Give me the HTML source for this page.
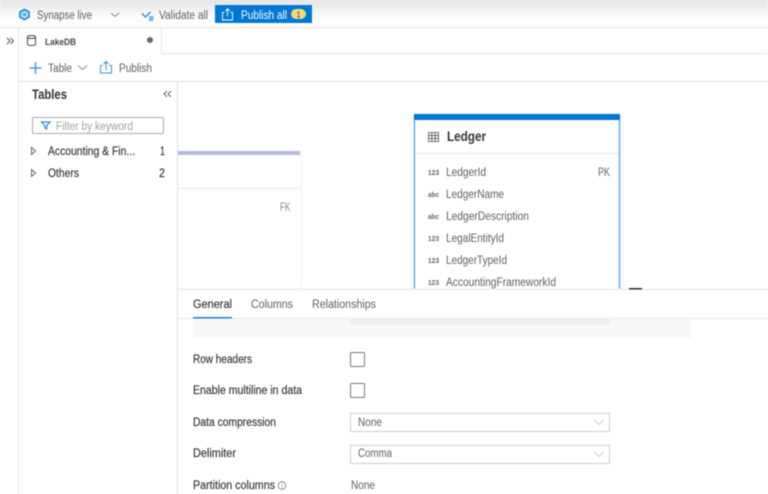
<!DOCTYPE html>
<html><head><meta charset="utf-8"><title>LakeDB</title>
<style>
html,body{margin:0;padding:0;background:#fff;width:768px;height:494px;overflow:hidden}
svg{display:block;filter:blur(.45px)}
text{font-family:"Liberation Sans",sans-serif;font-size:11.5px;fill:#444;}
.d{fill:#323130}.g{fill:#605e5c}.m{font-weight:400;fill:#333;stroke:#333;stroke-width:.15px}
.t{font-size:7.5px;font-weight:700;fill:#666}
</style></head><body>
<svg width="768" height="494" viewBox="0 0 768 494" xmlns="http://www.w3.org/2000/svg">
<defs><linearGradient id="top" x1="0" y1="0" x2="0" y2="1"><stop offset="0" stop-color="#e4e4e4"/><stop offset=".6" stop-color="#fbfbfb"/><stop offset="1" stop-color="#fff"/></linearGradient></defs>
<rect width="768" height="494" fill="#fff"/>
<rect width="768" height="27" fill="url(#top)"/>
<rect y="27" width="768" height="1.500" fill="#ececec"/>
<rect x="18" y="28" width="1" height="466" fill="#e6e6e6"/>
<rect x="161" y="28" width="1" height="25" fill="#e6e6e6"/>
<rect x="161" y="53" width="607" height="1" fill="#e6e6e6"/>
<rect x="19" y="81" width="749" height="1" fill="#dedede"/>
<rect x="177" y="82" width="1" height="412" fill="#dedede"/>

<!-- top bar -->
<path d="M24.500 9.500l4.500 2.500v5l-4.500 2.500-4.500-2.500v-5z" fill="#bfe3f7" stroke="#1f8ad8" stroke-width="1.700"/><circle cx="24.500" cy="14.500" r="1.800" fill="#4fb0e8"/>
<text x="37" y="19" class="g" textLength="55" lengthAdjust="spacingAndGlyphs">Synapse live</text>
<path d="M111 13l4 3.500 4-3.500" fill="none" stroke="#888" stroke-width="1"/>
<path d="M142 13.500l3.500 3.500 5-5" fill="none" stroke="#2a80c8" stroke-width="1.300"/><rect x="149" y="16" width="4.500" height="5" fill="#7ab8e8"/>
<text x="159" y="19" class="g" textLength="49" lengthAdjust="spacingAndGlyphs">Validate all</text>
<rect x="215" y="5" width="97" height="18" fill="#0078d4"/>
<path d="M224.500 12.500h-2v7.500h10v-7.500h-2M227.500 16.500v-7.500M225.300 11l2.200-2.200 2.200 2.200" fill="none" stroke="#fff" stroke-width=".9"/>
<text x="241" y="19" style="fill:#fff" textLength="46" lengthAdjust="spacingAndGlyphs">Publish all</text>
<rect x="291" y="9" width="15" height="10" rx="5" fill="#f5d77c"/>
<text x="296.500" y="17.500" style="font-size:8px;fill:#333" textLength="4" lengthAdjust="spacingAndGlyphs">1</text>

<!-- left strip -->
<path d="M7 38l3 3-3 3M10.500 38l3 3-3 3" fill="none" stroke="#555" stroke-width="1"/>

<!-- tab -->
<g fill="none" stroke="#444" stroke-width="1"><ellipse cx="31.500" cy="37" rx="4" ry="1.500"/><path d="M27.500 37v7c0 1 1.800 1.500 4 1.500s4-.5 4-1.500v-7"/></g>
<text x="45" y="45" class="d" style="font-size:9.500px;font-weight:700;fill:#444" textLength="31" lengthAdjust="spacingAndGlyphs">LakeDB</text>
<circle cx="150" cy="40" r="3" fill="#6a6a6a"/>

<!-- toolbar -->
<path d="M35.500 62v12M29.500 68h12" stroke="#2a8fd8" stroke-width="1.200" fill="none"/>
<text x="48" y="72" class="g" textLength="24" lengthAdjust="spacingAndGlyphs">Table</text>
<path d="M78 65.500l4.500 4 4.500-4" fill="none" stroke="#888" stroke-width="1"/>
<path d="M103 65.500h-2.500v7.500h11v-7.500h-2.500M106 70v-8M103.500 64l2.500-2.500 2.500 2.500" fill="none" stroke="#3a96d8" stroke-width="1"/>
<text x="119" y="72" class="g" textLength="33" lengthAdjust="spacingAndGlyphs">Publish</text>

<!-- tables panel -->
<text x="32" y="99" class="d" style="font-size:13.500px;font-weight:700" textLength="35" lengthAdjust="spacingAndGlyphs">Tables</text>
<path d="M167 91l-3 3 3 3M171 91l-3 3 3 3" fill="none" stroke="#666" stroke-width="1"/>
<rect x="32.500" y="117.500" width="131" height="16" rx="1" fill="#fff" stroke="#aaa"/>
<path d="M41.500 122h8.500l-3.200 3.500v3.500l-2-1v-2.500z" fill="none" stroke="#2a8fd8" stroke-width="1.200"/>
<text x="56" y="130" style="fill:#a0a0a0" textLength="77" lengthAdjust="spacingAndGlyphs">Filter by keyword</text>
<path d="M31.500 147.500l4 3.500-4 3.500z" fill="#fff" stroke="#666" stroke-width="1"/>
<text x="48" y="155" class="m" textLength="87" lengthAdjust="spacingAndGlyphs">Accounting &amp; Fin...</text>
<text x="160" y="155" class="m" textLength="5" lengthAdjust="spacingAndGlyphs">1</text>
<path d="M31.500 169.500l4 3.500-4 3.500z" fill="#fff" stroke="#666" stroke-width="1"/>
<text x="48" y="177" class="m" textLength="31" lengthAdjust="spacingAndGlyphs">Others</text>
<text x="159" y="177" class="m" textLength="6" lengthAdjust="spacingAndGlyphs">2</text>

<!-- left card -->
<rect x="300" y="153" width="3" height="136" fill="#f9f9f9"/>
<rect x="178" y="151" width="122" height="4" fill="#b4b9e0"/>
<rect x="178" y="188" width="122" height="1" fill="#e6e6e6"/>
<text x="280" y="211" style="fill:#888" textLength="10.500" lengthAdjust="spacingAndGlyphs">FK</text>

<!-- ledger card -->
<rect x="410" y="116" width="214" height="175" fill="#f9f9f9"/>
<rect x="414.500" y="114.500" width="205" height="180" rx="1" fill="#fff" stroke="#55a5e8" stroke-width="1.300"/>
<rect x="414" y="114" width="206" height="6" fill="#0078d4"/>
<rect x="415" y="153" width="204" height="1" fill="#e8e8e8"/>
<g fill="none" stroke="#666" stroke-width=".9"><rect x="428.500" y="132.500" width="10" height="9"/><path d="M428.500 135.500h10M428.500 138.500h10M431.800 132.500v9M435.200 132.500v9"/></g>
<text x="447" y="141" class="d" style="font-size:13.500px;font-weight:700" textLength="39" lengthAdjust="spacingAndGlyphs">Ledger</text>
<text x="428" y="175" class="t" textLength="11" lengthAdjust="spacingAndGlyphs">123</text>
<text x="446" y="176" class="g" textLength="40" lengthAdjust="spacingAndGlyphs">LedgerId</text>
<text x="598" y="176" class="g" textLength="12" lengthAdjust="spacingAndGlyphs">PK</text>
<text x="428" y="197" class="t" textLength="11" lengthAdjust="spacingAndGlyphs">abc</text>
<text x="446" y="198" class="g" textLength="58" lengthAdjust="spacingAndGlyphs">LedgerName</text>
<text x="428" y="219" class="t" textLength="11" lengthAdjust="spacingAndGlyphs">abc</text>
<text x="446" y="220" class="g" textLength="83" lengthAdjust="spacingAndGlyphs">LedgerDescription</text>
<text x="428" y="241" class="t" textLength="11" lengthAdjust="spacingAndGlyphs">123</text>
<text x="446" y="242" class="g" textLength="58" lengthAdjust="spacingAndGlyphs">LegalEntityId</text>
<text x="428" y="263" class="t" textLength="11" lengthAdjust="spacingAndGlyphs">123</text>
<text x="446" y="264" class="g" textLength="61" lengthAdjust="spacingAndGlyphs">LedgerTypeId</text>
<text x="428" y="285" class="t" textLength="11" lengthAdjust="spacingAndGlyphs">123</text>
<text x="446" y="286" class="g" textLength="110" lengthAdjust="spacingAndGlyphs">AccountingFrameworkId</text>

<!-- bottom panel -->
<rect x="178" y="290" width="590" height="204" fill="#fff"/>
<rect x="178" y="288.500" width="590" height="1.500" fill="#ececec"/>
<rect x="629" y="288" width="13" height="1.500" fill="#2a2a2a"/>
<rect x="178" y="318" width="590" height="1" fill="#e8e8e8"/>
<text x="193" y="308" class="m" textLength="39" lengthAdjust="spacingAndGlyphs">General</text>
<rect x="193" y="317" width="39" height="1.500" fill="#1a86d8"/>
<text x="251" y="308" class="g" textLength="42" lengthAdjust="spacingAndGlyphs">Columns</text>
<text x="312" y="308" class="g" textLength="64" lengthAdjust="spacingAndGlyphs">Relationships</text>
<rect x="193" y="319" width="498" height="19" fill="#f8f8f8"/>
<rect x="350" y="319" width="260" height="6" fill="#eeeeee"/>

<text x="193" y="363" class="m" textLength="59" lengthAdjust="spacingAndGlyphs">Row headers</text>
<rect x="350.500" y="352.500" width="14" height="14" rx="1" fill="#fff" stroke="#777"/>
<text x="193" y="394" class="m" textLength="109" lengthAdjust="spacingAndGlyphs">Enable multiline in data</text>
<rect x="350.500" y="383.500" width="14" height="14" rx="1" fill="#fff" stroke="#777"/>
<text x="193" y="426" class="m" textLength="83" lengthAdjust="spacingAndGlyphs">Data compression</text>
<rect x="350.500" y="413.500" width="259" height="18" fill="#fff" stroke="#ccc"/>
<text x="358" y="426" class="g" textLength="24" lengthAdjust="spacingAndGlyphs">None</text>
<path d="M594.500 420l4.500 4.500 4.500-4.500" fill="none" stroke="#ccc" stroke-width="1"/>
<text x="193" y="457" class="m" textLength="43" lengthAdjust="spacingAndGlyphs">Delimiter</text>
<rect x="350.500" y="445.500" width="259" height="18" fill="#fff" stroke="#ccc"/>
<text x="358" y="457" class="g" textLength="34" lengthAdjust="spacingAndGlyphs">Comma</text>
<path d="M594.500 452l4.500 4.500 4.500-4.500" fill="none" stroke="#ccc" stroke-width="1"/>
<text x="193" y="489" class="m" textLength="82" lengthAdjust="spacingAndGlyphs">Partition columns</text>
<circle cx="282" cy="485.500" r="3.800" fill="none" stroke="#777" stroke-width=".8"/><path d="M282 485v2.500M282 483.300v.8" stroke="#777" stroke-width=".7"/>
<text x="351" y="489" class="g" textLength="24" lengthAdjust="spacingAndGlyphs">None</text>
</svg>
</body></html>
